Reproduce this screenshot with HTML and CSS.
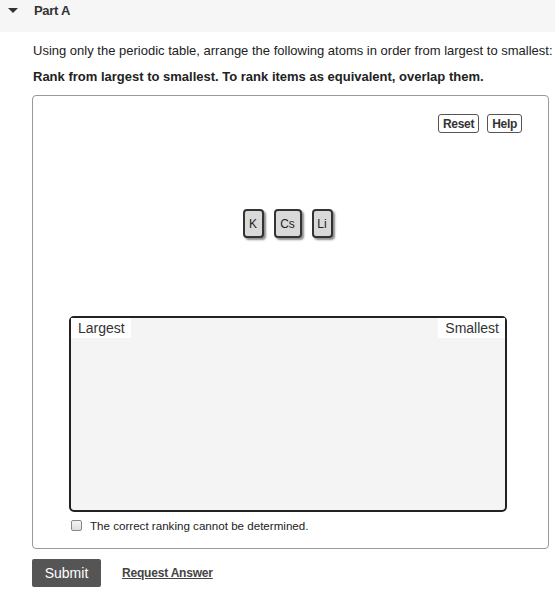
FILE: index.html
```html
<!DOCTYPE html>
<html lang="en">
<head>
  <meta charset="UTF-8">
  <meta name="viewport" content="width=device-width, initial-scale=1.0">
  <title>Part A</title>
  <link rel="stylesheet" href="styles.css">
</head>
<body>

  <!-- Part header -->
  <div class="part-header">
    <span class="caret"></span>
    <h2>Part A</h2>
  </div>

  <div class="part-body">
    <p class="prompt">Using only the periodic table, arrange the following atoms in order from largest to smallest:</p>
    <p class="instructions">Rank from largest to smallest. To rank items as equivalent, overlap them.</p>

    <div class="ranking-box">
      <div class="tools">
        <button class="tool-btn">Reset</button>
        <button class="tool-btn">Help</button>
      </div>

      <div class="tiles">
        <div class="tile">K</div>
        <div class="tile">Cs</div>
        <div class="tile">Li</div>
      </div>

      <div class="target">
        <span class="label">Largest</span>
        <span class="label">Smallest</span>
      </div>

      <label class="cannot">
        <span class="checkbox"></span>
        The correct ranking cannot be determined.
      </label>
    </div>

    <div class="actions">
      <button class="submit">Submit</button>
      <a href="#" class="request">Request Answer</a>
    </div>
  </div>

</body>
</html>
```

FILE: styles.css
```css
* {
    font-family: "Liberation Sans", Arial, Helvetica, sans-serif;
    box-sizing: border-box;
}

body {
    margin: 0;
    color: #222;
    background: #fff;
}

.part-header {
    display: flex;
    align-items: center;
    height: 32px;
    background-color: #f6f6f6;
    padding-bottom: 11px;
}

.caret {
    width: 0;
    height: 0;
    margin-left: 8px;
    border-left: 5px solid transparent;
    border-right: 5px solid transparent;
    border-top: 5px solid #333;
}

.part-header h2 {
    margin: 0 0 0 16px;
    font-size: 13px;
    font-weight: bold;
    color: #333;
    letter-spacing: -0.3px;
}

.part-body {
    padding-left: 32px;
    padding-right: 6px;
}

.prompt {
    margin: 11px 0 0 1px;
    font-size: 13px;
    line-height: 15px;
    color: #222;
    white-space: nowrap;
}

.instructions {
    margin: 11px 0 0 1px;
    font-size: 13px;
    line-height: 15px;
    font-weight: bold;
    color: #222;
}

.ranking-box {
    margin-top: 11px;
    height: 454px;
    border: 1px solid #999;
    border-radius: 4px;
    padding: 18px 26px 0 36px;
}

.tools {
    display: flex;
    justify-content: flex-end;
    gap: 8px;
}

.tool-btn {
    padding: 0 4px;
    height: 19px;
    font-size: 12px;
    font-weight: bold;
    color: #333;
    background: #fff;
    border: 1px solid #555;
    border-radius: 3px;
    letter-spacing: -0.3px;
}

.tiles {
    display: flex;
    justify-content: center;
    gap: 10px;
    margin-top: 76px;
    margin-left: -16px;
}

.tile {
    display: flex;
    align-items: center;
    justify-content: center;
    min-width: 21px;
    height: 29px;
    padding: 0 4px;
    font-size: 12px;
    color: #222;
    background-color: #d9d9d9;
    border: 2px solid #333;
    border-radius: 4px;
    box-shadow: 2px 2px 2px rgba(0, 0, 0, 0.45);
}

.tile:nth-child(2) {
    width: 28px;
}

.tile:nth-child(3) {
    width: 20px;
}

.target {
    display: flex;
    justify-content: space-between;
    align-items: flex-start;
    margin-top: 78px;
    margin-right: 15px;
    height: 196px;
    background-color: #f4f4f4;
    border: 2px solid #222;
    border-radius: 5px;
}

.label {
    padding: 1px 6px 1px 7px;
    font-size: 14px;
    line-height: 18px;
    color: #333;
    background: #fff;
}

.cannot {
    display: flex;
    align-items: center;
    gap: 8px;
    margin-top: 7px;
    margin-left: 2px;
    font-size: 11.6px;
    color: #222;
}

.checkbox {
    width: 11px;
    height: 11px;
    border: 1px solid #888;
    border-radius: 2px;
    background: linear-gradient(#f4f4f4, #ddd);
}

.actions {
    display: flex;
    align-items: center;
    gap: 21px;
    margin-top: 10px;
}

.submit {
    width: 69px;
    height: 28px;
    font-size: 14px;
    color: #fff;
    background-color: #555;
    border: none;
    border-radius: 2px;
}

.request {
    font-size: 12px;
    font-weight: bold;
    color: #444;
    text-decoration: underline;
    letter-spacing: -0.2px;
}
```
